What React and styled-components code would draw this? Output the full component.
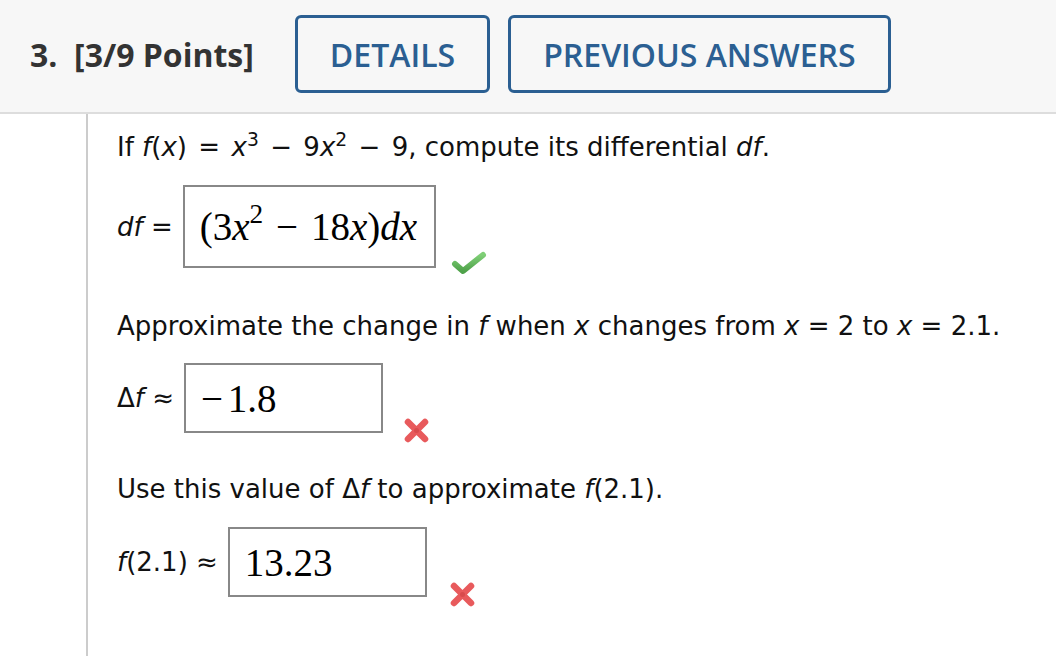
import React from 'react';
import styled, { createGlobalStyle } from 'styled-components';

const GlobalStyle = createGlobalStyle`
    html, body {
        margin: 0;
        padding: 0;
        background: #ffffff;
    }
    body {
        width: 1056px;
        height: 656px;
        overflow: hidden;
    }
`

const Page = styled.div`
    display: flex;
    flex-direction: column;
    height: 656px;
`

const Header = styled.header`
    height: 114px;
    background-color: #f7f7f7;
    border-bottom: 2px solid #dddddd;
    display: flex;
    align-items: center;
    padding-left: 30px;
    padding-bottom: 4px;
    box-sizing: border-box;
`

const Title = styled.h2`
    margin: 0 41px 0 0;
    font-family: "Open Sans", sans-serif;
    font-weight: 700;
    font-size: 32px;
    color: #333333;
    white-space: pre;
`

const HeaderButton = styled.button`
    height: 78px;
    padding: 0 32px;
    margin-right: 18px;
    background: transparent;
    border: 3px solid #2b5f92;
    border-radius: 6px;
    font-family: "Open Sans", sans-serif;
    font-weight: 600;
    font-size: 32px;
    color: #2b5f92;
    box-sizing: border-box;
    cursor: pointer;
`

const Body = styled.main`
    flex: 1;
    margin-left: 86px;
    border-left: 2px solid #cccccc;
    padding: 18px 0 0 29px;
    font-family: "DejaVu Sans", Verdana, sans-serif;
    font-size: 26px;
    color: #111111;
`

const Prompt = styled.p`
    margin: 0;
    line-height: 30px;
    white-space: nowrap;
`

const Sup = styled.sup`
    font-size: 0.72em;
    vertical-align: 0.55em;
    line-height: 0;
`

const Op = styled.span`
    margin: 0 0.12em;
`

const AnswerRow = styled.div`
    display: flex;
    align-items: center;
    margin-top: ${p => p.$top}px;
    margin-bottom: ${p => p.$bottom}px;
`

const Label = styled.span`
    margin-right: 10px;
    white-space: pre;
`

const AnswerBox = styled.div`
    width: ${p => p.$w}px;
    height: ${p => p.$h}px;
    box-sizing: border-box;
    border: 2px solid #888888;
    display: flex;
    align-items: center;
    padding-left: 15px;
    font-family: "Liberation Serif", "Times New Roman", serif;
    font-size: 39px;
    color: #000000;
    white-space: pre;
`

const MathText = styled.span`
    line-height: 1;
`

const MathSup = styled.sup`
    font-size: 0.7em;
    vertical-align: 0.62em;
    line-height: 0;
`

const Minus = styled.span`
    margin: 0 ${p => (p.$binary ? '0.33em' : '0.12em 0 0')};
`

const Mark = styled.span`
    align-self: flex-end;
    margin-left: ${p => p.$left}px;
    margin-bottom: ${p => p.$drop}px;
    display: flex;
`

function CheckIcon() {
    return (
        <svg width="36" height="24" viewBox="0 0 36 24">
            <defs>
                <linearGradient id="chk" x1="0" y1="0" x2="0" y2="1">
                    <stop offset="0" stopColor="#7fcf77" />
                    <stop offset="1" stopColor="#4fa24a" />
                </linearGradient>
            </defs>
            <path d="M4 13 L12 20 L32 4" fill="none" stroke="url(#chk)" strokeWidth="6" strokeLinecap="round" strokeLinejoin="round" />
        </svg>
    )
}

function CrossIcon() {
    return (
        <svg width="27" height="27" viewBox="0 0 27 27">
            <path d="M5 5 L22 22 M22 5 L5 22" fill="none" stroke="#e85a5c" strokeWidth="6.5" strokeLinecap="round" />
            <circle cx="13.5" cy="13.5" r="2.5" fill="#d84b4d" />
        </svg>
    )
}

export default function App() {
    return (
        <>
            <GlobalStyle />
            <Page>
                <Header>
                    <Title>3.  [3/9 Points]</Title>
                    <HeaderButton>DETAILS</HeaderButton>
                    <HeaderButton>PREVIOUS ANSWERS</HeaderButton>
                </Header>
                <Body>
                    <Prompt>
                        If <i>f</i>(<i>x</i>) <Op>=</Op> <i>x</i><Sup>3</Sup> <Op>−</Op> 9<i>x</i><Sup>2</Sup> <Op>−</Op> 9, compute its differential <i>df</i>.
                    </Prompt>
                    <AnswerRow $top={23} $bottom={43}>
                        <Label><i>df</i> =</Label>
                        <AnswerBox $w={253} $h={83}>
                            <MathText>(3<i>x</i><MathSup>2</MathSup><Minus $binary>−</Minus>18<i>x</i>)<i>dx</i></MathText>
                        </AnswerBox>
                        <Mark $left={15} $drop={-7}><CheckIcon /></Mark>
                    </AnswerRow>
                    <Prompt>
                        Approximate the change in <i>f</i> when <i>x</i> changes from <i>x</i> = 2 to <i>x</i> = 2.1.
                    </Prompt>
                    <AnswerRow $top={22} $bottom={41}>
                        <Label>Δ<i>f</i> ≈</Label>
                        <AnswerBox $w={199} $h={70}><MathText><Minus>−</Minus>1.8</MathText></AnswerBox>
                        <Mark $left={20} $drop={-11}><CrossIcon /></Mark>
                    </AnswerRow>
                    <Prompt>
                        Use this value of Δ<i>f</i> to approximate <i>f</i>(2.1).
                    </Prompt>
                    <AnswerRow $top={23} $bottom={0}>
                        <Label><i>f</i>(2.1) ≈</Label>
                        <AnswerBox $w={199} $h={70}><MathText>13.23</MathText></AnswerBox>
                        <Mark $left={22} $drop={-11}><CrossIcon /></Mark>
                    </AnswerRow>
                </Body>
            </Page>
        </>
    )
}
